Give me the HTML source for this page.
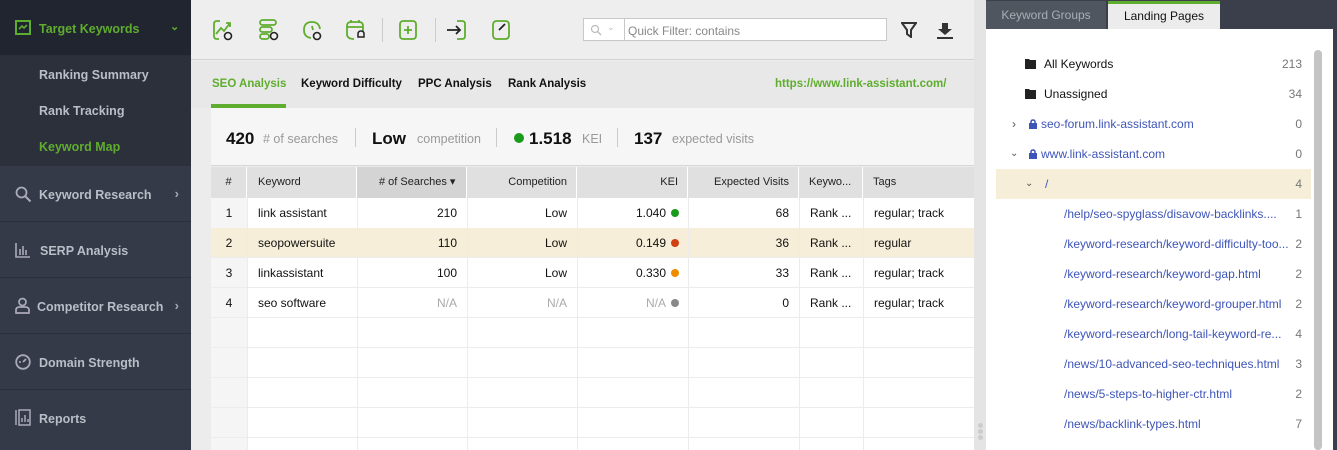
<!DOCTYPE html>
<html><head><meta charset="utf-8"><style>
*{margin:0;padding:0;box-sizing:border-box}
body{width:1337px;height:450px;overflow:hidden;font-family:"Liberation Sans",Arial,sans-serif;font-size:12px;color:#111;background:#e9e9e9;position:relative}
.abs{position:absolute}
#side{left:0;top:0;width:191px;height:450px;background:#343a47}
.si{position:absolute;left:0;width:191px;height:56px;border-bottom:1px solid #2a2f39;color:#b9bec7;font-weight:bold;font-size:12.5px}
.si span{position:absolute;top:20px}
.sub{position:absolute;left:39px;font-weight:bold;font-size:12.5px;color:#b9bec7}
.chev{position:absolute;right:12px;top:19px;color:#aab;font-size:13px}
#main{left:191px;top:0;width:783px;height:450px;background:#ececec}
.th{position:absolute;top:167px;height:31px;line-height:31px;background:#e0e0e0;border-right:1px solid #fff;font-size:11px;color:#222}
.cell{position:absolute;height:30px;line-height:30px;font-size:12px}
.vl{position:absolute;top:198px;width:1px;height:252px;background:#ececec}
.hl{position:absolute;left:211px;width:763px;height:1px;background:#ececec}
.rp{position:absolute;left:0;width:100%;height:30px;line-height:30px;font-size:12px}
.lk{color:#3e55b8}
.num{position:absolute;right:35px;color:#777}
.tab{position:absolute;top:78px;font-weight:bold;font-size:11.5px}
</style></head><body>
<div class="abs" style="left:0;top:0;width:1337px;height:2px;background:#3a3f4b"></div>
<div id="side" class="abs">
 <div class="si" style="top:0;background:#202530;color:#5fad2f;height:56px">
  <svg class="abs" style="left:15px;top:20px" width="16" height="15" viewBox="0 0 16 15"><rect x="1" y="1" width="14" height="13" fill="none" stroke="#5fad2f" stroke-width="2"/><path d="M4 9 L7 6 L9 8 L12 5" stroke="#5fad2f" stroke-width="1.6" fill="none"/></svg>
  <span style="left:39px;top:22px;color:#5fad2f">Target Keywords</span>
  <span style="left:170px;top:20px;color:#5fad2f;font-size:11px">&#8964;</span>
 </div>
 <div class="abs" style="left:0;top:56px;width:191px;height:110px;background:#2b303b"></div>
 <div class="sub" style="top:68px">Ranking Summary</div>
 <div class="sub" style="top:104px">Rank Tracking</div>
 <div class="sub" style="top:140px;color:#5fad2f">Keyword Map</div>
 <div class="si" style="top:166px"><svg class="abs" style="left:15px;top:20px" width="17" height="17" viewBox="0 0 17 17"><circle cx="6.5" cy="6.5" r="5" fill="none" stroke="#aab" stroke-width="1.8"/><path d="M10 10 L15.5 15.5" stroke="#aab" stroke-width="2"/></svg><span style="left:39px;top:22px">Keyword Research</span><span class="chev" style="top:20px">&#8250;</span></div>
 <div class="si" style="top:222px"><svg class="abs" style="left:15px;top:20px" width="16" height="16" viewBox="0 0 16 16"><path d="M1 1V15H15M5 13V7M8 13V4M11 13V8" stroke="#aab" stroke-width="1.6" fill="none"/></svg><span style="left:40px;top:22px">SERP Analysis</span></div>
 <div class="si" style="top:278px"><svg class="abs" style="left:15px;top:19px" width="15" height="17" viewBox="0 0 15 17"><circle cx="7.5" cy="5" r="3.5" fill="none" stroke="#aab" stroke-width="1.7"/><path d="M1 16V13Q1 10 5 10H10Q14 10 14 13V16Z" fill="none" stroke="#aab" stroke-width="1.7"/></svg><span style="left:37px;top:22px">Competitor Research</span><span class="chev" style="top:20px">&#8250;</span></div>
 <div class="si" style="top:334px"><svg class="abs" style="left:15px;top:20px" width="16" height="16" viewBox="0 0 16 16"><circle cx="8" cy="8" r="6.8" fill="none" stroke="#aab" stroke-width="1.8"/><path d="M8 8L11 5" stroke="#aab" stroke-width="1.8"/><circle cx="5" cy="8" r="1" fill="#aab"/></svg><span style="left:39px;top:22px">Domain Strength</span></div>
 <div class="si" style="top:390px;border:none"><svg class="abs" style="left:15px;top:19px" width="16" height="17" viewBox="0 0 16 17"><path d="M1 1V16M4 1H15V16H4Z M7 13V9M10 13V6M13 13V10" stroke="#aab" stroke-width="1.5" fill="none"/></svg><span style="left:39px;top:22px">Reports</span></div>
</div>

<div id="main" class="abs">
 <div class="abs" style="left:0;top:0;width:783px;height:60px;background:#eeeeee;border-bottom:1px solid #d2d2d2"></div>
 <svg class="abs" style="left:20px;top:17px" width="320" height="26" viewBox="0 0 320 26" fill="none" stroke="#5fad2f" stroke-width="1.8">
  <path d="M8 22H6Q3 22 3 19V7Q3 4 6 4H9"/><path d="M5 17L10 11L13 14L19 6M15 6H19V10"/>
  <circle cx="17" cy="19" r="3.5" stroke="#222" stroke-width="1.6"/>
  <rect x="49" y="3" width="16" height="5" rx="2.5"/><rect x="49" y="10" width="12" height="5" rx="2.5"/><rect x="49" y="17" width="9" height="5" rx="2.5"/>
  <circle cx="63" cy="19" r="3.5" stroke="#222" stroke-width="1.6"/>
  <path d="M100 21Q93 20 93 13Q93 5 101 5Q108 5 109 12M101 9L102 13"/>
  <circle cx="106" cy="19" r="3.5" stroke="#222" stroke-width="1.6"/>
  <path d="M143 22Q136 22 136 17V9Q136 5 140 5H148Q152 5 152 9V14M136 10H152M140 3V6M148 3V6"/>
  <path d="M147 17Q147 14 150 14Q153 14 153 17V20H147Z" stroke="#222" stroke-width="1.5"/>
  <rect x="189" y="4" width="16" height="18" rx="3"/><path d="M197 9V17M193 13H201"/>
  <path d="M246 4H251Q254 4 254 7V19Q254 22 251 22H246"/><path d="M236 13H249M245 9L249 13L245 17" stroke="#222"/>
  <path d="M286 4H294Q298 4 298 8V18Q298 22 294 22H286Q282 22 282 18V8Q282 4 286 4Z"/><path d="M288 13L294 7" stroke="#222"/>
 </svg>
 <div class="abs" style="left:191px;top:18px;width:1px;height:24px;background:#ccc"></div>
 <div class="abs" style="left:244px;top:18px;width:1px;height:24px;background:#ccc"></div>
 <div class="abs" style="left:392px;top:18px;width:304px;height:23px;background:#fff;border:1px solid #c8c8c8"></div>
 <div class="abs" style="left:433px;top:18px;width:1px;height:23px;background:#c8c8c8"></div>
 <svg class="abs" style="left:399px;top:24px" width="12" height="12" viewBox="0 0 12 12"><circle cx="5" cy="5" r="3.5" fill="none" stroke="#bbb" stroke-width="1.2"/><path d="M7.5 7.5L11 11" stroke="#bbb" stroke-width="1.3"/></svg>
 <div class="abs" style="left:416px;top:22px;color:#bbb;font-size:9px">&#8964;</div>
 <div class="abs" style="left:437px;top:24px;color:#888;font-size:12px">Quick Filter: contains</div>
 <svg class="abs" style="left:710px;top:22px" width="16" height="16" viewBox="0 0 16 16"><path d="M1 1H15L10 8V15L6 12V8Z" fill="none" stroke="#333" stroke-width="2"/></svg>
 <svg class="abs" style="left:745px;top:22px" width="18" height="18" viewBox="0 0 18 18"><path d="M6 1H12V7H16L9 13L2 7H6Z" fill="#333"/><rect x="1" y="15" width="16" height="2" fill="#333"/></svg>

 <div class="abs" style="left:0;top:61px;width:783px;height:47px;background:#e8e8e8"></div>
 <div class="tab" style="left:21px;color:#5fad2f">SEO Analysis</div>
 <div class="abs" style="left:20px;top:104px;width:75px;height:4px;background:#5fad2f"></div>
 <div class="tab" style="left:110px">Keyword Difficulty</div>
 <div class="tab" style="left:227px">PPC Analysis</div>
 <div class="tab" style="left:317px">Rank Analysis</div>
 <div class="tab" style="left:584px;color:#5fad2f">https://www.link-assistant.com/</div>

 <div class="abs" style="left:20px;top:108px;width:763px;height:58px;background:#f6f6f6;border-bottom:1px solid #d6d6d6"></div>
 <div class="abs" style="left:35px;top:129px;font-size:17px;font-weight:bold">420</div><div class="abs" style="left:72px;top:132px;font-size:12.5px;color:#999"># of searches</div>
 <div class="abs" style="left:164px;top:128px;width:1px;height:19px;background:#ccc"></div>
 <div class="abs" style="left:181px;top:129px;font-size:17px;font-weight:bold">Low</div><div class="abs" style="left:226px;top:132px;font-size:12.5px;color:#999">competition</div>
 <div class="abs" style="left:305px;top:128px;width:1px;height:19px;background:#ccc"></div>
 <div class="abs" style="left:323px;top:133px;width:10px;height:10px;border-radius:50%;background:#1a9a1a"></div>
 <div class="abs" style="left:338px;top:129px;font-size:17px;font-weight:bold">1.518</div><div class="abs" style="left:391px;top:132px;font-size:12.5px;color:#999">KEI</div>
 <div class="abs" style="left:426px;top:128px;width:1px;height:19px;background:#ccc"></div>
 <div class="abs" style="left:443px;top:129px;font-size:17px;font-weight:bold">137</div><div class="abs" style="left:481px;top:132px;font-size:12.5px;color:#999">expected visits</div>
</div>

<div class="abs" style="left:211px;top:198px;width:763px;height:252px;background:#fff"></div>
<div class="abs" style="left:211px;top:198px;width:36px;height:252px;background:#f5f5f5"></div>
<div class="abs" style="left:211px;top:228px;width:763px;height:30px;background:#f6eed8"></div>
<div class="th" style="left:211px;width:36px;text-align:center">#</div>
<div class="th" style="left:247px;width:110px;padding-left:11px">Keyword</div>
<div class="th" style="left:357px;width:110px;background:#d4d4d4;padding-left:22px"># of Searches &#9662;</div>
<div class="th" style="left:467px;width:110px;text-align:right;padding-right:9px">Competition</div>
<div class="th" style="left:577px;width:111px;text-align:right;padding-right:9px">KEI</div>
<div class="th" style="left:688px;width:111px;text-align:right;padding-right:9px">Expected Visits</div>
<div class="th" style="left:799px;width:64px;padding-left:10px">Keywo...</div>
<div class="th" style="left:863px;width:111px;padding-left:10px;border:none">Tags</div>
<div class="vl" style="left:247px"></div><div class="vl" style="left:357px"></div><div class="vl" style="left:467px"></div><div class="vl" style="left:577px"></div><div class="vl" style="left:688px"></div><div class="vl" style="left:799px"></div><div class="vl" style="left:863px"></div>
<div class="hl" style="top:257px"></div><div class="hl" style="top:287px"></div><div class="hl" style="top:317px"></div><div class="hl" style="top:347px"></div><div class="hl" style="top:377px"></div><div class="hl" style="top:407px"></div><div class="hl" style="top:437px"></div>

<div class="cell" style="top:198px;left:211px;width:36px;text-align:center">1</div>
<div class="cell" style="top:198px;left:258px">link assistant</div>
<div class="cell" style="top:198px;left:357px;width:100px;text-align:right">210</div>
<div class="cell" style="top:198px;left:467px;width:100px;text-align:right">Low</div>
<div class="cell" style="top:198px;left:577px;width:89px;text-align:right">1.040</div><div class="abs" style="left:671px;top:209px;width:8px;height:8px;border-radius:50%;background:#1a9a1a"></div>
<div class="cell" style="top:198px;left:688px;width:101px;text-align:right">68</div>
<div class="cell" style="top:198px;left:810px">Rank ...</div>
<div class="cell" style="top:198px;left:874px">regular; track</div>

<div class="cell" style="top:228px;left:211px;width:36px;text-align:center">2</div>
<div class="cell" style="top:228px;left:258px">seopowersuite</div>
<div class="cell" style="top:228px;left:357px;width:100px;text-align:right">110</div>
<div class="cell" style="top:228px;left:467px;width:100px;text-align:right">Low</div>
<div class="cell" style="top:228px;left:577px;width:89px;text-align:right">0.149</div><div class="abs" style="left:671px;top:239px;width:8px;height:8px;border-radius:50%;background:#d04010"></div>
<div class="cell" style="top:228px;left:688px;width:101px;text-align:right">36</div>
<div class="cell" style="top:228px;left:810px">Rank ...</div>
<div class="cell" style="top:228px;left:874px">regular</div>

<div class="cell" style="top:258px;left:211px;width:36px;text-align:center">3</div>
<div class="cell" style="top:258px;left:258px">linkassistant</div>
<div class="cell" style="top:258px;left:357px;width:100px;text-align:right">100</div>
<div class="cell" style="top:258px;left:467px;width:100px;text-align:right">Low</div>
<div class="cell" style="top:258px;left:577px;width:89px;text-align:right">0.330</div><div class="abs" style="left:671px;top:269px;width:8px;height:8px;border-radius:50%;background:#f08c00"></div>
<div class="cell" style="top:258px;left:688px;width:101px;text-align:right">33</div>
<div class="cell" style="top:258px;left:810px">Rank ...</div>
<div class="cell" style="top:258px;left:874px">regular; track</div>

<div class="cell" style="top:288px;left:211px;width:36px;text-align:center">4</div>
<div class="cell" style="top:288px;left:258px">seo software</div>
<div class="cell" style="top:288px;left:357px;width:100px;text-align:right;color:#aaa">N/A</div>
<div class="cell" style="top:288px;left:467px;width:100px;text-align:right;color:#aaa">N/A</div>
<div class="cell" style="top:288px;left:577px;width:89px;text-align:right;color:#aaa">N/A</div><div class="abs" style="left:671px;top:299px;width:8px;height:8px;border-radius:50%;background:#888"></div>
<div class="cell" style="top:288px;left:688px;width:101px;text-align:right">0</div>
<div class="cell" style="top:288px;left:810px">Rank ...</div>
<div class="cell" style="top:288px;left:874px">regular; track</div>

<div class="abs" style="left:974px;top:0;width:12px;height:450px;background:#e4e4e4"></div>
<div class="abs" style="left:978px;top:423px;width:5px;height:5px;border-radius:50%;background:#ccc"></div>
<div class="abs" style="left:978px;top:429px;width:5px;height:5px;border-radius:50%;background:#ccc"></div>
<div class="abs" style="left:978px;top:435px;width:5px;height:5px;border-radius:50%;background:#ccc"></div>

<div class="abs" style="left:986px;top:0;width:351px;height:450px;background:#fff">
 <div class="abs" style="left:0;top:0;width:351px;height:29px;background:#3a3f4b"></div>
 <div class="abs" style="left:0;top:1px;width:120px;height:28px;background:#50565f;color:#a9aeb5;font-size:12px;text-align:center;line-height:28px">Keyword Groups</div>
 <div class="abs" style="left:122px;top:1px;width:112px;height:28px;background:#ececec;border-top:3px solid #5fad2f;color:#111;font-size:12px;text-align:center;line-height:25px">Landing Pages</div>
 <div class="abs" style="left:328px;top:50px;width:8px;height:400px;border-radius:4px;background:#c4c4c4"></div>
 <div class="abs" style="left:347px;top:29px;width:4px;height:421px;background:#3a3f4b"></div>
 <div class="abs" style="left:10px;top:169px;width:315px;height:30px;background:#f6eed8"></div>
 <div class="abs" style="left:0;top:49px;width:351px">
  <div class="rp" style="top:0"><svg class="abs" style="left:39px;top:10px" width="11" height="10" viewBox="0 0 11 10"><path d="M0 0H4L5 1H11V10H0Z" fill="#222"/></svg><span class="abs" style="left:58px">All Keywords</span><span class="num">213</span></div>
  <div class="rp" style="top:30px"><svg class="abs" style="left:39px;top:10px" width="11" height="10" viewBox="0 0 11 10"><path d="M0 0H4L5 1H11V10H0Z" fill="#222"/></svg><span class="abs" style="left:58px">Unassigned</span><span class="num">34</span></div>
  <div class="rp" style="top:60px"><span class="abs" style="left:26px;color:#555">&#8250;</span><svg class="abs" style="left:43px;top:10px" width="8" height="10" viewBox="0 0 8 10"><path d="M2 4V3Q2 1 4 1Q6 1 6 3V4" stroke="#3e55b8" stroke-width="1.5" fill="none"/><rect x="0" y="4" width="8" height="6" fill="#3e55b8"/></svg><span class="abs lk" style="left:55px">seo-forum.link-assistant.com</span><span class="num">0</span></div>
  <div class="rp" style="top:90px"><span class="abs" style="left:24px;color:#555;font-size:10px">&#8964;</span><svg class="abs" style="left:43px;top:10px" width="8" height="10" viewBox="0 0 8 10"><path d="M2 4V3Q2 1 4 1Q6 1 6 3V4" stroke="#3e55b8" stroke-width="1.5" fill="none"/><rect x="0" y="4" width="8" height="6" fill="#3e55b8"/></svg><span class="abs lk" style="left:55px">www.link-assistant.com</span><span class="num">0</span></div>
  <div class="rp" style="top:120px"><span class="abs" style="left:39px;color:#555;font-size:10px">&#8964;</span><span class="abs lk" style="left:59px">/</span><span class="num">4</span></div>
  <div class="rp" style="top:150px"><span class="abs lk" style="left:78px">/help/seo-spyglass/disavow-backlinks....</span><span class="num">1</span></div>
  <div class="rp" style="top:180px"><span class="abs lk" style="left:78px">/keyword-research/keyword-difficulty-too...</span><span class="num">2</span></div>
  <div class="rp" style="top:210px"><span class="abs lk" style="left:78px">/keyword-research/keyword-gap.html</span><span class="num">2</span></div>
  <div class="rp" style="top:240px"><span class="abs lk" style="left:78px">/keyword-research/keyword-grouper.html</span><span class="num">2</span></div>
  <div class="rp" style="top:270px"><span class="abs lk" style="left:78px">/keyword-research/long-tail-keyword-re...</span><span class="num">4</span></div>
  <div class="rp" style="top:300px"><span class="abs lk" style="left:78px">/news/10-advanced-seo-techniques.html</span><span class="num">3</span></div>
  <div class="rp" style="top:330px"><span class="abs lk" style="left:78px">/news/5-steps-to-higher-ctr.html</span><span class="num">2</span></div>
  <div class="rp" style="top:360px"><span class="abs lk" style="left:78px">/news/backlink-types.html</span><span class="num">7</span></div>
 </div>
</div>
</body></html>
